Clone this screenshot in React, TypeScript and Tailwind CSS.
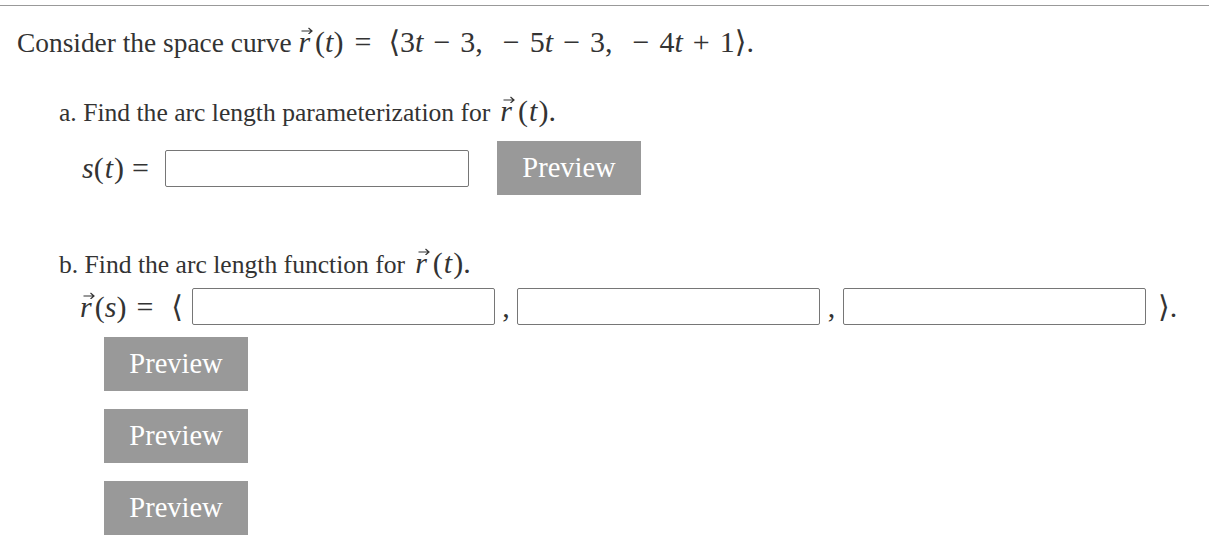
import React from 'react';

// r with a vector arrow on top
const VecR: React.FC<{ cls?: string }> = ({ cls = 'mr-[5px]' }) => (
  <span className={`relative inline-block italic leading-none ${cls}`}>
    r
    <svg
      className="absolute left-[3px] -top-[1px]"
      width="12"
      height="8"
      viewBox="0 0 12 8"
    >
      <path d="M0.5 5H10.5M7.5 2L11 5L7.5 8" stroke="#333" strokeWidth="1.2" fill="none" />
    </svg>
  </span>
);

const Op: React.FC<{ children: React.ReactNode; cls?: string }> = ({ children, cls = 'mx-[10px]' }) => (
  <span className={cls}>{children}</span>
);

const I: React.FC<{ children: React.ReactNode; cls?: string }> = ({ children, cls = '' }) => (
  <span className={`italic ${cls}`}>{children}</span>
);

const AnswerBox: React.FC<{ className?: string }> = ({ className = 'w-[304px]' }) => (
  <input
    type="text"
    className={`h-[37px] border border-[#767676] rounded-[2px] bg-white outline-none ${className}`}
  />
);

const PreviewButton: React.FC = () => (
  <button className="h-[54px] w-[144px] bg-[#999999] text-white text-[28.5px] leading-none [font-family:'Liberation_Serif',serif]">
    Preview
  </button>
);

export default function App() {
  return (
    <div className="min-h-screen bg-white text-[#333] [font-family:'Liberation_Serif','DejaVu_Serif',serif]">
      <div className="pt-[5px]">
        <div className="h-px bg-[#999]" />
      </div>

      {/* Statement */}
      <p className="mt-[19px] pl-[17px] text-[27.4px] leading-[36px] whitespace-nowrap">
        Consider the space curve{' '}
        <span className="text-[30px] leading-none">
          <VecR />(<I>t</I>)
          <Op cls="ml-[11px] mr-[17px]">=</Op>
          ⟨3<I>t</I>
          <Op>−</Op>3,
          <Op cls="ml-[20px] mr-[10px]">−</Op>5<I>t</I>
          <Op>−</Op>3,
          <Op cls="ml-[20px] mr-[10px]">−</Op>4<I>t</I>
          <Op>+</Op>1⟩.
        </span>
      </p>

      {/* Part a */}
      <p className="mt-[34px] pl-[59px] text-[25.6px] leading-[36px] whitespace-nowrap">
        a. Find the arc length parameterization for
        <span className="ml-[10px] text-[30px] leading-none">
          <VecR cls="mr-[6px]" />(<I cls="px-[1px]">t</I>).
        </span>
      </p>
      <div className="mt-[10px] flex items-center h-[54px] pl-[82px]">
        <span className="text-[30px] leading-none whitespace-nowrap w-[83px]">
          <I>s</I>(<I cls="px-[1px]">t</I>)<span className="ml-[8px]">=</span>
        </span>
        <AnswerBox />
        <div className="ml-[28px]">
          <PreviewButton />
        </div>
      </div>

      {/* Part b */}
      <p className="mt-[52px] pl-[59px] text-[25.6px] leading-[36px] whitespace-nowrap">
        b. Find the arc length function for
        <span className="ml-[10px] text-[30px] leading-none">
          <VecR cls="mr-[6px]" />(<I cls="px-[1px]">t</I>).
        </span>
      </p>
      <div className="mt-[5px] flex items-center h-[37px] pl-[80px] text-[30px] leading-none">
        <span className="whitespace-nowrap w-[112px]">
          <VecR cls="mr-[3px]" />(<I>s</I>)<Op cls="ml-[10px] mr-[18px]">=</Op>⟨
        </span>
        <AnswerBox className="w-[303px]" />
        <span className="w-[22px] text-center">,</span>
        <AnswerBox className="w-[303px]" />
        <span className="w-[23px] text-center">,</span>
        <AnswerBox className="w-[303px]" />
        <span className="ml-[12px] whitespace-nowrap">⟩.</span>
      </div>

      <div className="mt-[12px] pl-[104px] flex flex-col gap-[18px] pb-[12px]">
        <PreviewButton />
        <PreviewButton />
        <PreviewButton />
      </div>
    </div>
  );
}
